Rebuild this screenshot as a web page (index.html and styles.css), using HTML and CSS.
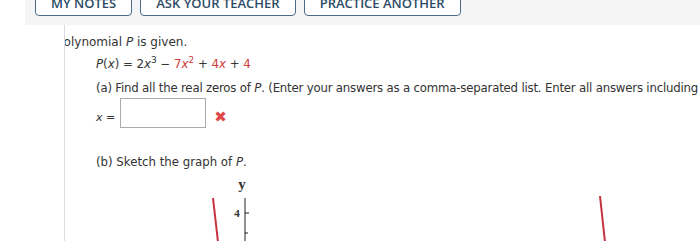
FILE: index.html
```html
<!DOCTYPE html>
<html>
<head>
<meta charset="utf-8">
<link rel="stylesheet" href="styles.css">
</head>
<body>
<div class="toolbar">
  <button class="tbtn">My Notes</button>
  <button class="tbtn">Ask Your Teacher</button>
  <button class="tbtn">Practice Another</button>
</div>
<div class="main">
  <div class="gutter"></div>
  <div class="content">
    <p class="intro">polynomial <i>P</i> is given.</p>
    <div class="indent">
      <p class="formula"><i>P</i>(<i>x</i>) = 2<i>x</i><sup>3</sup> &minus; <span class="red">7<i>x</i><sup>2</sup></span> + <span class="red">4</span><i class="red">x</i> + <span class="red">4</span></p>
      <p class="q">(a) Find all the real zeros of <i>P</i>. (Enter your answers as a comma-separated list. Enter all answers including</p>
      <div class="answer">
        <span class="xlabel"><i>x</i> =</span>
        <span class="box"></span>
        <span class="wrong">&#x2716;</span>
      </div>
      <p class="qb">(b) Sketch the graph of <i>P</i>.</p>
    </div>
    <svg class="graph" width="635" height="71" viewBox="0 0 635 71">
      <text x="177" y="19" class="axislbl" text-anchor="middle">y</text>
      <line x1="180" y1="28" x2="180" y2="71" stroke="#222" stroke-width="1"/>
      <line x1="180" y1="43" x2="184" y2="43" stroke="#222" stroke-width="1"/>
      <line x1="180" y1="63" x2="183" y2="63" stroke="#222" stroke-width="1"/>
      <text x="172" y="47" class="ticklbl" text-anchor="middle">4</text>
      <line x1="148" y1="28" x2="153" y2="72" stroke="#c8323e" stroke-width="2"/>
      <line x1="535" y1="26" x2="540" y2="72" stroke="#c8323e" stroke-width="2"/>
    </svg>
  </div>
</div>
</body>
</html>
```
FILE: styles.css
```css
html, body {
  margin: 0;
  padding: 0;
  background: #fff;
}
body {
  width: 700px;
  height: 241px;
  overflow: hidden;
  font-family: "DejaVu Sans", Verdana, sans-serif;
  font-size: 11.75px;
  color: #333;
}
.toolbar {
  margin-left: 25px;
  height: 25px;
  box-sizing: border-box;
  background: #f5f5f5;
  display: flex;
  align-items: flex-end;
  gap: 8px;
  padding-left: 10px;
  padding-bottom: 9px;
}
.tbtn {
  flex: none;
  height: 30px;
  box-sizing: border-box;
  border: 1.5px solid #4a6b88;
  border-radius: 4px;
  background: #fff;
  color: #2d4b66;
  font-family: "Open Sans", sans-serif;
  font-weight: 600;
  font-size: 13px;
  text-transform: uppercase;
  padding: 0 15px;
  line-height: 32px;
}
.main {
  display: flex;
  height: 216px;
}
.gutter {
  width: 64px;
  flex: none;
  border-right: 1px solid #dcdcdc;
}
.content {
  flex: 1;
  overflow: hidden;
  white-space: nowrap;
}
p {
  margin: 0;
  line-height: 16px;
}
.intro {
  margin-top: 9px;
  margin-left: -9px;
  font-size: 12px;
}
.indent {
  padding-left: 31px;
}
.formula {
  margin-top: 6px;
}
sup {
  font-size: 9px;
  line-height: 0;
  vertical-align: 5px;
}
.red {
  color: #d03a3a;
}
.q {
  margin-top: 8px;
  letter-spacing: -0.2px;
}
.answer {
  display: flex;
  align-items: center;
  margin-top: 2px;
  height: 30px;
}
.xlabel {
  margin-top: 8px;
  margin-right: 5px;
  font-size: 11px;
}
.box {
  width: 86px;
  height: 30px;
  box-sizing: border-box;
  border: 1px solid #aaa;
  background: #fff;
}
.wrong {
  margin-top: 8px;
  margin-left: 8px;
  color: #e04848;
  font-size: 15px;
  line-height: 15px;
}
.qb {
  margin-top: 26px;
}
.graph {
  display: block;
}
.axislbl {
  font-family: "Liberation Serif", serif;
  font-weight: bold;
  font-size: 15px;
  fill: #333;
}
.ticklbl {
  font-family: "Liberation Serif", serif;
  font-weight: bold;
  font-size: 11px;
  fill: #333;
}
```
